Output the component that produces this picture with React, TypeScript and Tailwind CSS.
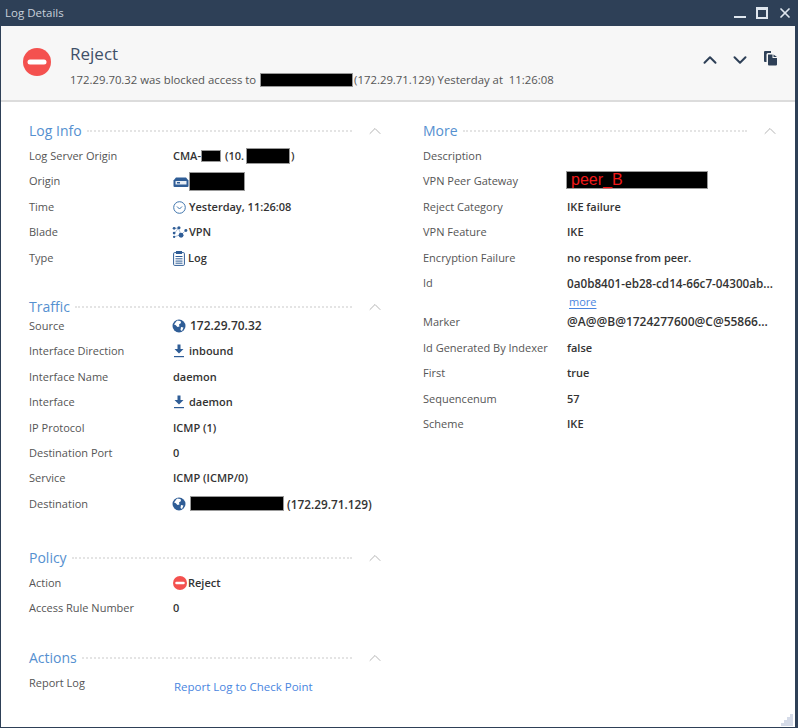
import type { ReactNode } from 'react';
import { ChevronDown, ChevronUp, X } from 'lucide-react';

const RejectIcon = ({ size, className = '' }: { size: number; className?: string }) => (
    <svg width={size} height={size} viewBox="0 0 28 28" className={`shrink-0 ${className}`}>
        <circle cx="14" cy="14" r="14" fill="#f4514f" />
        <rect x="4.5" y="11.5" width="19" height="5" rx="2.5" fill="#fff" />
    </svg>
);

const GlobeIcon = () => (
    <svg width="14" height="14" viewBox="0 0 14 14" className="-ml-[1px] shrink-0">
        <circle cx="7" cy="7" r="6.5" fill="#2f5d96" />
        <path d="M5 1.5 L8.5 2 L9 4 L7 5.5 L7.5 7.5 L5.5 8 L3.5 6 L2 5.5 Z M9 8 L11.5 8.5 L10 12 L8.5 11 Z" fill="#fff" />
    </svg>
);

const DownloadIcon = () => (
    <svg width="12" height="14" viewBox="0 0 12 14" className="shrink-0">
        <path d="M4.5 0.5h3V5h3L6 9.5 1.5 5h3z" fill="#2f5d96" />
        <rect x="1" y="12" width="10" height="1.2" fill="#2f5d96" />
    </svg>
);

const ClockIcon = () => (
    <svg width="13" height="13" viewBox="0 0 13 13" fill="none" className="mt-[2px] shrink-0">
        <circle cx="6.5" cy="6.5" r="5.8" stroke="#3f75ad" strokeWidth="1" />
        <path d="M4 5.5 L6.5 8 L9 5.5" stroke="#3f75ad" strokeWidth="1" />
    </svg>
);

const GatewayIcon = () => (
    <svg width="16" height="10" viewBox="0 0 16 10" className="shrink-0">
        <path d="M3 0.5h10l2.5 3V9a1 1 0 0 1-1 1h-13a1 1 0 0 1-1-1V3.500z" fill="#2f5d96" />
        <rect x="2.500" y="4" width="11" height="3.500" fill="#e8eef5" />
        <rect x="4" y="5" width="3" height="1.500" fill="#2f5d96" />
    </svg>
);

const BladeIcon = () => (
    <svg width="16" height="14" viewBox="0 0 15 13" className="-ml-[1px] shrink-0" fill="#2f5d96">
        <path d="M2 3 L6 3 L8.500 9 L13 5 M2 8 L6 3 M2 11 L8.500 9" stroke="#7f9fc4" strokeWidth="0.6" fill="none" />
        <circle cx="2" cy="3" r="1.300" />
        <circle cx="6.500" cy="2.500" r="1.500" />
        <circle cx="2" cy="7.500" r="1.300" />
        <circle cx="2" cy="11" r="1.100" />
        <circle cx="8.500" cy="9.500" r="2.300" />
        <circle cx="13" cy="5" r="1.400" />
    </svg>
);

const LogIcon = () => (
    <svg width="12" height="15" viewBox="0 0 12 15" fill="none" className="mt-[2px] shrink-0" stroke="#2f5d96">
        <rect x="0.600" y="1.600" width="10.800" height="12.800" rx="1" />
        <rect x="3.500" y="0.500" width="5" height="2" fill="#2f5d96" />
        <path d="M2.500 5.500h7M2.500 7.800h7M2.500 10.100h7M2.500 12.200h7" />
    </svg>
);

const CopyIcon = () => (
    <svg width="13" height="15" viewBox="0 0 13 15" fill="#2e4057">
        <path d="M0 1a1 1 0 0 1 1-1h6v2H4a1.500 1.500 0 0 0-1.500 1.500V11H1a1 1 0 0 1-1-1z" />
        <path d="M4 3.500h4.500V7H13v6.500a1 1 0 0 1-1 1H5a1 1 0 0 1-1-1z" />
        <path d="M9.500 3.500 13 6h-3.500z" />
    </svg>
);

const ResizeGrip = () => (
    <svg width="12" height="12" viewBox="0 0 12 12" fill="#d5dbe8" className="absolute right-[2px] bottom-[1px]">
        <rect x="9" y="0" width="3" height="3" />
        <rect x="6" y="3" width="3" height="3" />
        <rect x="9" y="3" width="3" height="3" />
        <rect x="3" y="6" width="3" height="3" />
        <rect x="6" y="6" width="3" height="3" />
        <rect x="9" y="6" width="3" height="3" />
        <rect x="0" y="9" width="3" height="3" />
        <rect x="3" y="9" width="3" height="3" />
        <rect x="6" y="9" width="3" height="3" />
        <rect x="9" y="9" width="3" height="3" />
    </svg>
);

const Redacted = ({ className }: { className: string }) => <span className={`inline-block bg-black border border-[#999] ${className}`} />;

const Row = ({ label, children, className = 'h-[25.4px]' }: { label: string; children?: ReactNode; className?: string }) => (
    <div className={`flex items-start ${className}`}>
        <div className="w-[144px] shrink-0 pt-[5px] text-[#555]">{label}</div>
        <div className="flex min-w-0 items-center pt-[5px] font-semibold whitespace-nowrap text-[#333]">{children}</div>
    </div>
);

const Section = ({
    title,
    children,
    className = '',
    titleClassName = 'h-[22px]',
}: {
    title: string;
    children: ReactNode;
    className?: string;
    titleClassName?: string;
}) => (
    <section className={className}>
        <div className={`flex items-center ${titleClassName}`}>
            <h2 className="text-[14px] leading-none font-normal text-[#5590d0]">{title}</h2>
            <div className="mx-[5px] flex-1 border-t-2 border-dotted border-[#e4e4e4]" />
            <ChevronUp size={20} strokeWidth={1.2} className="ml-[8px] text-[#b5b5b5]" />
        </div>
        {children}
    </section>
);

export default function App() {
    return (
        <div className="flex h-[728px] w-[798px] flex-col bg-white text-[11px] leading-[18px] font-['Open_Sans','Noto_Sans',sans-serif]">
            <div className="flex h-[26px] shrink-0 items-center bg-[#2e4057] pr-[5px] pl-[5px] text-[11.5px] text-[#c9d1db]">
                <span className="flex-1">Log Details</span>
                <div className="mt-[7px] mr-[10px] h-[2px] w-[12px] bg-[#dfe6ee]" />
                <div className="mr-[9px] h-[12px] w-[12px] border-2 border-t-[3px] border-[#dfe6ee]" />
                <X size={16} strokeWidth={2.6} className="text-[#dfe6ee]" />
            </div>
            <div className="relative flex min-h-0 flex-1 flex-col border-r-[3px] border-b border-l-[1px] border-[#2e4057]">
                <header className="flex h-[76px] shrink-0 items-center border-b-2 border-[#dcdcdc] bg-[#f7f7f7] pr-[18px] pl-[22px]">
                    <RejectIcon size={28} className="mb-[3px]" />
                    <div className="ml-[19px] flex-1 self-start pt-[16px]">
                        <div className="text-[17px] leading-[24px] text-[#3f5068]">Reject</div>
                        <div className="mt-[5px] flex items-center text-[11.35px] whitespace-pre text-[#555]">
                            172.29.70.32 was blocked access to <Redacted className="mx-[1px] h-[14px] w-[93px]" />
                            (172.29.71.129) Yesterday at  11:26:08
                        </div>
                    </div>
                    <ChevronUp size={22} strokeWidth={2.2} className="mb-[7px] text-[#2e4057]" />
                    <ChevronDown size={22} strokeWidth={2.2} className="mb-[7px] ml-[8px] text-[#2e4057]" />
                    <div className="mb-[9px] ml-[13px]">
                        <CopyIcon />
                    </div>
                </header>
                <div className="grid flex-1 grid-cols-[356px_357px] gap-x-[38px] pt-[18px] pl-[28px]">
                    <div>
                        <Section title="Log Info">
                            <Row label="Log Server Origin">
                                CMA-
                                <Redacted className="h-[12px] w-[20px]" />
                                <span className="mr-[2px] ml-[4px]">(10.</span>
                                <Redacted className="h-[16px] w-[44px]" />
                                <span className="ml-[1px]">)</span>
                            </Row>
                            <Row label="Origin">
                                <GatewayIcon />
                                <Redacted className="h-[19px] w-[56px]" />
                            </Row>
                            <Row label="Time">
                                <ClockIcon />
                                <span className="ml-[3px]">Yesterday, 11:26:08</span>
                            </Row>
                            <Row label="Blade">
                                <BladeIcon />
                                <span className="ml-[1px]">VPN</span>
                            </Row>
                            <Row label="Type">
                                <LogIcon />
                                <span className="ml-[3px]">Log</span>
                            </Row>
                        </Section>
                        <Section title="Traffic" className="mt-[33px]" titleClassName="h-[10px]">
                            <Row label="Source">
                                <GlobeIcon />
                                <span className="ml-[4px] text-[12px]">172.29.70.32</span>
                            </Row>
                            <Row label="Interface Direction">
                                <DownloadIcon />
                                <span className="ml-[4px]">inbound</span>
                            </Row>
                            <Row label="Interface Name">daemon</Row>
                            <Row label="Interface">
                                <DownloadIcon />
                                <span className="ml-[4px]">daemon</span>
                            </Row>
                            <Row label="IP Protocol">ICMP (1)</Row>
                            <Row label="Destination Port">0</Row>
                            <Row label="Service">ICMP (ICMP/0)</Row>
                            <Row label="Destination">
                                <GlobeIcon />
                                <Redacted className="ml-[4px] h-[15px] w-[94px]" />
                                <span className="ml-[3px] text-[11.8px]">(172.29.71.129)</span>
                            </Row>
                        </Section>
                        <Section title="Policy" className="mt-[32px]">
                            <Row label="Action">
                                <RejectIcon size={14} />
                                <span className="ml-[1px]">Reject</span>
                            </Row>
                            <Row label="Access Rule Number">0</Row>
                        </Section>
                        <Section title="Actions" className="mt-[27px]">
                            <Row label="Report Log">
                                <span className="mt-[4px] ml-[1px] text-[11.5px] font-normal text-[#4a86e0]">Report Log to Check Point</span>
                            </Row>
                        </Section>
                    </div>
                    <div>
                        <Section title="More">
                            <Row label="Description" />
                            <Row label="VPN Peer Gateway">
                                <span className="-mt-[1px] -ml-[1px] h-[18px] w-[142px] border border-[#999] bg-black pl-[4px] font-['Liberation_Sans',sans-serif] text-[16px] leading-[16px] font-normal text-[#f01818]">
                                    peer_B
                                </span>
                            </Row>
                            <Row label="Reject Category">IKE failure</Row>
                            <Row label="VPN Feature">IKE</Row>
                            <Row label="Encryption Failure">no response from peer.</Row>
                            <Row label="Id" className="h-[20px]">
                                <span className="text-[11.7px]">0a0b8401-eb28-cd14-66c7-04300ab...</span>
                            </Row>
                            <div className="h-[19.500px] pt-[4.500px] pl-[146px] text-[#4a86e0] underline underline-offset-2">more</div>
                            <Row label="Marker">
                                <span className="text-[12px]">@A@@B@1724277600@C@55866...</span>
                            </Row>
                            <Row label="Id Generated By Indexer">false</Row>
                            <Row label="First">true</Row>
                            <Row label="Sequencenum">57</Row>
                            <Row label="Scheme">IKE</Row>
                        </Section>
                    </div>
                </div>
                <ResizeGrip />
            </div>
        </div>
    );
}
